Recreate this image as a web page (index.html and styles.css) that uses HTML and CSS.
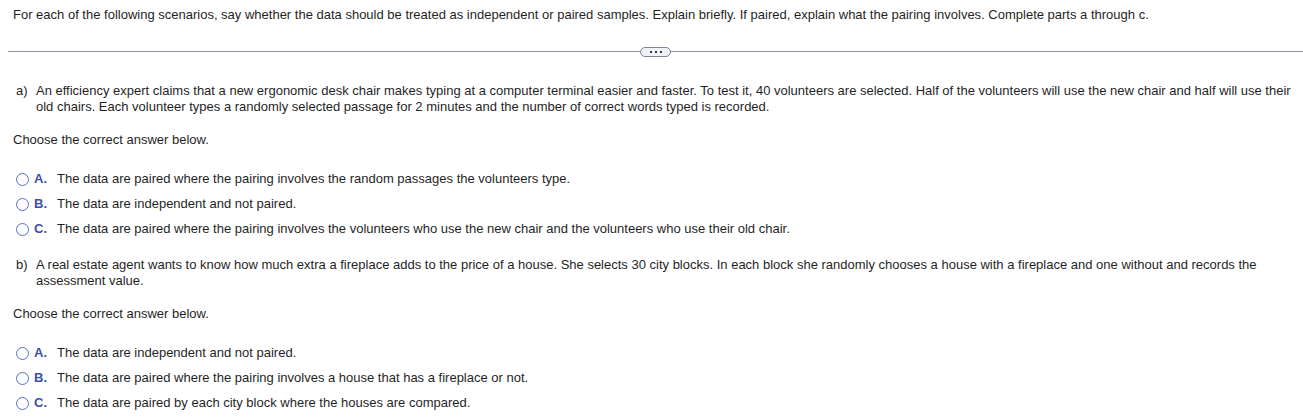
FILE: index.html
```html
<!DOCTYPE html>
<html>
<head>
<meta charset="utf-8">
<link rel="stylesheet" href="styles.css">
</head>
<body>
<div class="intro">For each of the following scenarios, say whether the data should be treated as independent or paired samples. Explain briefly. If paired, explain what the pairing involves. Complete parts a through c.</div>
<div class="divider">
  <span class="rule"></span>
  <span class="more"><i></i><i></i><i></i></span>
  <span class="rule"></span>
</div>

<div class="part part-a">
  <div class="question"><span class="qlabel">a)</span><span class="qtext">An efficiency expert claims that a new ergonomic desk chair makes typing at a computer terminal easier and faster. To test it, 40 volunteers are selected. Half of the volunteers will use the new chair and half will use their old chairs. Each volunteer types a randomly selected passage for 2 minutes and the number of correct words typed is recorded.</span></div>
  <div class="choose">Choose the correct answer below.</div>
  <ul class="options">
    <li><span class="radio"></span><span class="letter">A.</span><span>The data are paired where the pairing involves the random passages the volunteers type.</span></li>
    <li><span class="radio"></span><span class="letter">B.</span><span>The data are independent and not paired.</span></li>
    <li><span class="radio"></span><span class="letter">C.</span><span>The data are paired where the pairing involves the volunteers who use the new chair and the volunteers who use their old chair.</span></li>
  </ul>
</div>

<div class="part part-b">
  <div class="question"><span class="qlabel">b)</span><span class="qtext">A real estate agent wants to know how much extra a fireplace adds to the price of a house. She selects 30 city blocks. In each block she randomly chooses a house with a fireplace and one without and records the assessment value.</span></div>
  <div class="choose">Choose the correct answer below.</div>
  <ul class="options">
    <li><span class="radio"></span><span class="letter">A.</span><span>The data are independent and not paired.</span></li>
    <li><span class="radio"></span><span class="letter">B.</span><span>The data are paired where the pairing involves a house that has a fireplace or not.</span></li>
    <li><span class="radio"></span><span class="letter">C.</span><span>The data are paired by each city block where the houses are compared.</span></li>
  </ul>
</div>
</body>
</html>
```

FILE: styles.css
```css
html, body {
  margin: 0;
  padding: 0;
  background: #ffffff;
}
body {
  font-family: "Liberation Sans", Arial, sans-serif;
  font-size: 13px;
  color: #1f1f1f;
  line-height: 16px;
}
.intro {
  padding: 7px 0 0 13px;
}
.divider {
  display: flex;
  align-items: center;
  margin: 23px 0 0 8px;
  height: 11px;
}
.rule {
  flex: 1;
  height: 1px;
  background: #8d93a6;
}
.more {
  width: 29px;
  height: 8px;
  border: 1px solid #7d8597;
  border-radius: 5px;
  background: #eef1f6;
  display: flex;
  align-items: center;
  justify-content: center;
  gap: 3px;
}
.more i {
  width: 2px;
  height: 2px;
  background: #2f3440;
  display: block;
}
.part {
  padding-left: 13px;
}
.part-a {
  margin-top: 26px;
}
.part-b {
  margin-top: 15.5px;
}
.question {
  display: flex;
  padding-left: 3px;
  padding-right: 8px;
}
.qlabel {
  width: 20px;
  flex: none;
}
.qtext {
  flex: 1;
}
.choose {
  margin-top: 17px;
}
.options {
  list-style: none;
  margin: 18.5px 0 0 0;
  padding: 0;
}
.options li {
  display: flex;
  align-items: center;
  height: 25px;
}
.radio {
  width: 11px;
  height: 11px;
  border: 1px solid #5470d0;
  border-radius: 50%;
  margin-left: 3px;
  flex: none;
}
.letter {
  color: #3b51a8;
  font-weight: bold;
  margin-left: 5px;
  width: 23px;
  flex: none;
}
```
